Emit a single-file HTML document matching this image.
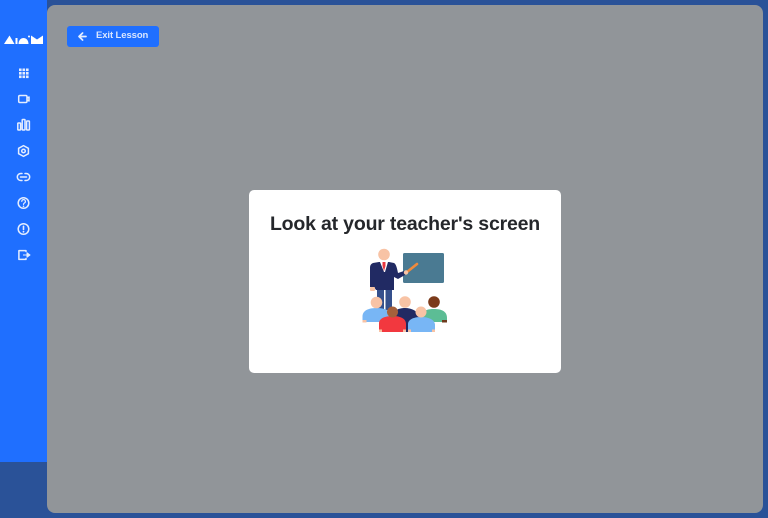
<!DOCTYPE html>
<html>
<head>
<meta charset="utf-8">
<style>
html,body{margin:0;padding:0;width:768px;height:518px;overflow:hidden;background:#2a5298;font-family:"Liberation Sans",sans-serif}
.side{position:absolute;left:0;top:0;width:47px;height:462px;background:#1f6fff}
.panel{position:absolute;left:47px;top:5px;width:716px;height:508px;background:#919599;border-radius:8px}
.btn{position:absolute;left:67px;top:26px;width:92px;height:21px;background:#1f6fff;border-radius:3px}
.btn span{position:absolute;left:29px;top:2.500px;font-size:9.500px;line-height:14px;font-weight:bold;color:#d9e6ff;letter-spacing:-.1px;white-space:nowrap}
.card{position:absolute;left:249px;top:190px;width:312px;height:183px;background:#fff;border-radius:5px}
.card h1{position:absolute;left:0;top:22px;width:100%;margin:0;text-align:center;font-size:19.500px;line-height:24px;font-weight:bold;color:#25272b;letter-spacing:-.19px;white-space:nowrap}
svg{position:absolute;left:0;top:0}
</style>
</head>
<body>
<div class="side"></div>
<div class="panel"></div>
<div class="btn"><span>Exit Lesson</span></div>
<div class="card"><h1>Look at your teacher's screen</h1></div>
<svg width="768" height="518" viewBox="0 0 768 518">
  <!-- logo -->
  <g fill="#fff">
    <path d="M4 44 L9.500 35.500 L14.500 44 Z"/>
    <rect x="15.500" y="38" width="2" height="6"/>
    <path d="M18.500 44 C18.500 36 28.500 36 28.500 44 Z"/>
    <circle cx="29" cy="36.500" r="1"/>
    <path d="M31 35.500 L37 39.500 L43 35.500 L43 44 L31 44 Z"/>
  </g>
  <!-- grid icon -->
  <g fill="#e4edff">
    <rect x="19" y="68.500" width="2.600" height="2.600"/><rect x="22.500" y="68.500" width="2.600" height="2.600"/><rect x="26" y="68.500" width="2.600" height="2.600"/>
    <rect x="19" y="72" width="2.600" height="2.600"/><rect x="22.500" y="72" width="2.600" height="2.600"/><rect x="26" y="72" width="2.600" height="2.600"/>
    <rect x="19" y="75.500" width="2.600" height="2.600"/><rect x="22.500" y="75.500" width="2.600" height="2.600"/><rect x="26" y="75.500" width="2.600" height="2.600"/>
  </g>
  <g fill="none" stroke="#e4edff" stroke-width="1.500" stroke-linecap="round" stroke-linejoin="round">
    <!-- video -->
    <rect x="18.700" y="95.500" width="8.300" height="7" rx="1.200"/>
    <path d="M27 98 L29 97 V101 L27 100"/>
    <!-- bars -->
    <rect x="17.800" y="123" width="2.800" height="7" rx=".6"/>
    <rect x="22.200" y="119.500" width="2.800" height="10.500" rx=".6"/>
    <rect x="26.600" y="121" width="2.800" height="9" rx=".6"/>
    <!-- hex gear -->
    <path d="M23.500 145.600 L28.400 148.300 V153.700 L23.500 156.400 L18.600 153.700 V148.300 Z"/>
    <circle cx="23.500" cy="151" r="1.800"/>
    <!-- link -->
    <path d="M22 173.500 H20.800 A3.500 3.500 0 0 0 20.800 180.500 H22"/>
    <path d="M25 173.500 H26.200 A3.500 3.500 0 0 1 26.200 180.500 H25"/>
    <path d="M20.500 177 H26.500"/>
    <!-- help -->
    <circle cx="23.500" cy="203" r="5.300"/>
    <path d="M21.800 201.400 A1.800 1.800 0 1 1 24.400 203 C23.800 203.400 23.500 203.700 23.500 204.400" stroke-width="1.200"/>
    <!-- info -->
    <circle cx="23.500" cy="229" r="5.300"/>
    <path d="M23.500 226.300 V229.500" stroke-width="1.600"/>
    <!-- logout -->
    <path d="M26 251.500 V250.600 H18.900 V259.400 H26 V258.500"/>
  </g>
  <circle cx="23.500" cy="206.300" r=".8" fill="#e4edff"/>
  <circle cx="23.500" cy="231.800" r=".9" fill="#e4edff"/>
  <path d="M23 255 H27 V252.800 L30 255 L27 257.200 V255" fill="#e4edff" stroke="#e4edff" stroke-linejoin="round"/>
  <!-- arrow -->
  <path d="M86 36.500 H79.500 M82.600 33 L79 36.500 L82.600 40" fill="none" stroke="#e4edff" stroke-width="1.700" stroke-linecap="round" stroke-linejoin="round"/>

  <!-- illustration -->
  <rect x="403" y="253" width="41" height="30" rx="1.500" fill="#4a7a92"/>
  <path d="M407 272 L417 264" stroke="#f08a3c" stroke-width="2.600" stroke-linecap="round"/>
  <!-- teacher -->
  <rect x="377" y="288" width="15" height="22" fill="#35508c"/>
  <rect x="384" y="288" width="1.500" height="22" fill="#fff"/>
  <path d="M373 263 L379 262 H389 L394 263 C396 264 397 268 398 273 L404 271 L405 275 L398 279 L394 277 V290 H376 L374 287 H370 V268 C370 265 371 264 373 263 Z" fill="#212a63"/>
  <path d="M380 262 H388 L385 272 L384 272 Z" fill="#fff"/>
  <path d="M382.500 262 H385.500 L385.500 266 L384 271 L382.500 266 Z" fill="#e8353f"/>
  <circle cx="384" cy="254.500" r="5.800" fill="#f8c3a5"/>
  <rect x="370" y="287" width="5" height="4" rx="1" fill="#f8c3a5"/>
  <circle cx="406" cy="272.500" r="2.200" fill="#f8c3a5"/>
  <!-- green student -->
  <path d="M423 322 V314 C424 310 428 309 434 309 C441 309 447 311 447 318 V322 Z" fill="#5cbd95"/>
  <rect x="442" y="320" width="5" height="2.500" fill="#6d3a1c"/>
  <circle cx="434" cy="302" r="5.800" fill="#7b3a1a"/>
  <!-- navy student -->
  <path d="M391 332 V318 C393 310 399 308 405 308 C412 308 418 311 420 318 V332 Z" fill="#212a63"/>
  <circle cx="405" cy="302" r="5.800" fill="#f8c3a5"/>
  <!-- light blue left -->
  <path d="M362.500 322 V316 C363 310 369 308 377 308 C384 308 390 310 391 316 V322 Z" fill="#78b6f5"/>
  <rect x="362.500" y="320" width="4" height="2.500" fill="#f8c3a5"/>
  <circle cx="376.500" cy="302.500" r="5.800" fill="#f8c3a5"/>
  <!-- red student -->
  <path d="M379 332 V323 C379 319 384 316 392.500 316 C401 316 406 319 406 324 V332 Z" fill="#f2383f"/>
  <rect x="379" y="329.500" width="3" height="2.500" fill="#f8c3a5"/>
  <rect x="403" y="329.500" width="3" height="2.500" fill="#f8c3a5"/>
  <circle cx="392.500" cy="312" r="5.500" fill="#a5603b"/>
  <!-- light blue right -->
  <path d="M408 332 V324 C408 320 413 317 421 317 C429 317 435 320 435 325 V332 Z" fill="#78b6f5"/>
  <rect x="408" y="329.500" width="3" height="2.500" fill="#f8c3a5"/>
  <rect x="432" y="329.500" width="3" height="2.500" fill="#f8c3a5"/>
  <circle cx="421" cy="312" r="5.500" fill="#f8c3a5"/>
</svg>
</body>
</html>
